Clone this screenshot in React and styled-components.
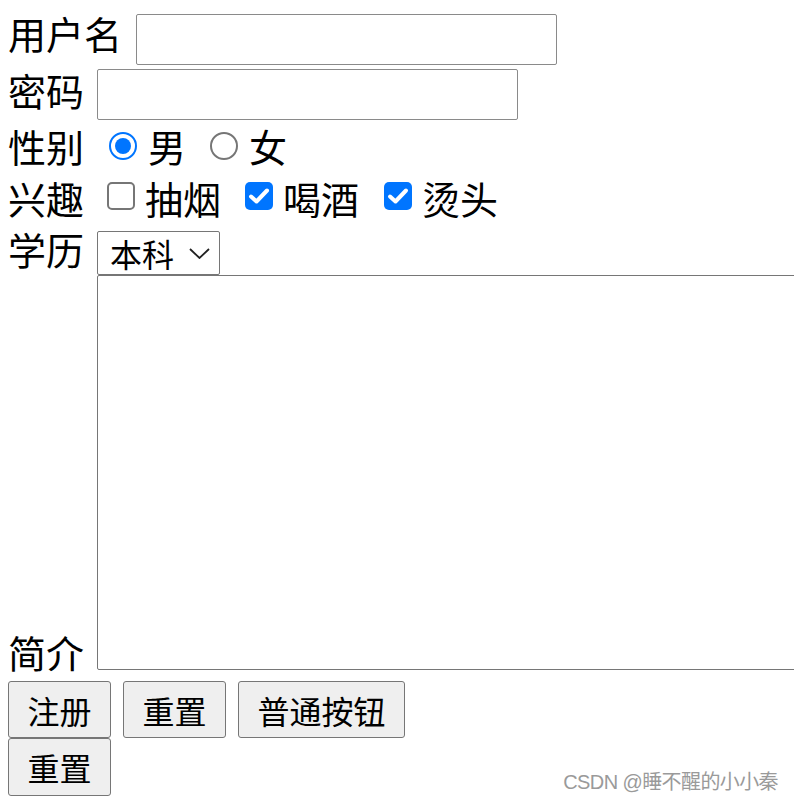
import React from "react";
import styled, { createGlobalStyle } from "styled-components";

const GlobalStyle = createGlobalStyle`
  html, body {
    margin: 0;
    padding: 0;
    background: #fff;
  }
  body {
    width: 794px;
    height: 799px;
    overflow: hidden;
    font-family: "Noto Sans CJK SC", "Microsoft YaHei", sans-serif;
    color: #000;
  }
`;

const Form = styled.form`
  position: relative;
  width: 794px;
  height: 799px;
  overflow: hidden;
  padding-left: 8px;
  box-sizing: border-box;
  display: flex;
  flex-direction: column;
`;

const Row = styled.div`
  display: flex;
  align-items: flex-start;
  flex-shrink: 0;
  box-sizing: border-box;
  height: ${(p) => p.$h}px;
  padding-top: ${(p) => p.$pad || 0}px;
  gap: ${(p) => p.$gap || 0}px;
`;

const Label = styled.span`
  font-size: 38px;
  line-height: 38px;
  white-space: nowrap;
  margin-top: ${(p) => p.$top || 0}px;
  margin-right: ${(p) => p.$gap || 0}px;
`;

const BottomLabel = styled(Label)`
  align-self: flex-end;
  margin-bottom: 10px;
`;

const TextInput = styled.input`
  width: 421px;
  height: 51px;
  box-sizing: border-box;
  margin: 0;
  padding: 2px 5px;
  border: 1.5px solid #8a8a8a;
  border-radius: 2px;
  font-size: 32px;
  font-family: inherit;
  outline: none;
`;

const Choice = styled.label`
  display: flex;
  align-items: flex-start;
  margin-left: ${(p) => p.$left}px;
`;

const RadioMark = styled.span`
  width: 28px;
  height: 28px;
  box-sizing: border-box;
  border-radius: 50%;
  border: 2.4px solid ${(p) => (p.$checked ? "#0075ff" : "#767676")};
  background: #fff;
  display: flex;
  align-items: center;
  justify-content: center;
  margin-top: 10px;
  margin-right: 11px;

  &::after {
    content: "";
    display: ${(p) => (p.$checked ? "block" : "none")};
    width: 16px;
    height: 16px;
    border-radius: 50%;
    background: #0075ff;
  }
`;

const CheckMark = styled.span`
  width: 28px;
  height: 28px;
  box-sizing: border-box;
  border-radius: 5px;
  border: ${(p) => (p.$checked ? "none" : "2.4px solid #767676")};
  background: ${(p) => (p.$checked ? "#0075ff" : "#fff")};
  display: flex;
  align-items: center;
  justify-content: center;
  margin-top: 8px;
  margin-right: 10px;
`;

const SelectBox = styled.div`
  width: 123px;
  height: 44px;
  box-sizing: border-box;
  margin-top: 5px;
  padding-left: 12px;
  border: 1.5px solid #767676;
  border-radius: 2px;
  display: flex;
  align-items: center;
  gap: 15px;
  font-size: 32px;
  line-height: 1;
  background: #fff;
`;

const TextArea = styled.textarea`
  width: 720px;
  height: 395px;
  box-sizing: border-box;
  margin: 0;
  border: 1.5px solid #767676;
  border-radius: 2px;
  resize: none;
  outline: none;
  flex-shrink: 0;
`;

const Button = styled.button`
  height: ${(p) => p.$h || 57}px;
  box-sizing: border-box;
  margin: 0;
  padding: 0 18.5px;
  background: #efefef;
  border: 1.5px solid #767676;
  border-radius: 3px;
  font-family: inherit;
  font-size: 32px;
  line-height: 1;
  color: #000;
`;

const Watermark = styled.div`
  position: absolute;
  right: 16px;
  bottom: 4px;
  font-family: "Liberation Sans", "Noto Sans CJK SC", sans-serif;
  font-size: 20px;
  letter-spacing: -0.6px;
  color: #9a9a9a;
  white-space: nowrap;
`;

function Check() {
  return (
    <svg width="28" height="28" viewBox="0 0 28 28">
      <path
        d="M6 14.5 L11.5 19.5 L22 8.5"
        fill="none"
        stroke="#fff"
        strokeWidth="4"
        strokeLinecap="round"
        strokeLinejoin="round"
      />
    </svg>
  );
}

function Chevron() {
  return (
    <svg width="21" height="11" viewBox="0 0 21 11">
      <path d="M1 1 L10.5 10 L20 1" fill="none" stroke="#222" strokeWidth="1.8" />
    </svg>
  );
}

export default function App() {
  return (
    <>
      <GlobalStyle />
      <Form onSubmit={(e) => e.preventDefault()}>
        <Row $h={67} $pad={14}>
          <Label $gap={14}>用户名</Label>
          <TextInput type="text" />
        </Row>
        <Row $h={55} $pad={2}>
          <Label $top={2} $gap={13}>密码</Label>
          <TextInput type="password" />
        </Row>
        <Row $h={52}>
          <Label $top={4.5}>性别</Label>
          <Choice $left={25}>
            <RadioMark $checked />
            <Label $top={4.5}>男</Label>
          </Choice>
          <Choice $left={24}>
            <RadioMark />
            <Label $top={4.5}>女</Label>
          </Choice>
        </Row>
        <Row $h={52}>
          <Label $top={4.5}>兴趣</Label>
          <Choice $left={23}>
            <CheckMark />
            <Label $top={4.5}>抽烟</Label>
          </Choice>
          <Choice $left={24}>
            <CheckMark $checked>
              <Check />
            </CheckMark>
            <Label $top={4.5}>喝酒</Label>
          </Choice>
          <Choice $left={25}>
            <CheckMark $checked>
              <Check />
            </CheckMark>
            <Label $top={4.5}>烫头</Label>
          </Choice>
        </Row>
        <Row $h={49}>
          <Label $top={4} $gap={13}>学历</Label>
          <SelectBox>
            <span>本科</span>
            <Chevron />
          </SelectBox>
        </Row>
        <Row $h={406}>
          <BottomLabel $gap={13}>简介</BottomLabel>
          <TextArea />
        </Row>
        <Row $h={57} $gap={12}>
          <Button type="submit">注册</Button>
          <Button type="reset">重置</Button>
          <Button type="button">普通按钮</Button>
        </Row>
        <Row $h={58}>
          <Button type="reset" $h={58}>重置</Button>
        </Row>
        <Watermark>CSDN @睡不醒的小小秦</Watermark>
      </Form>
    </>
  );
}
